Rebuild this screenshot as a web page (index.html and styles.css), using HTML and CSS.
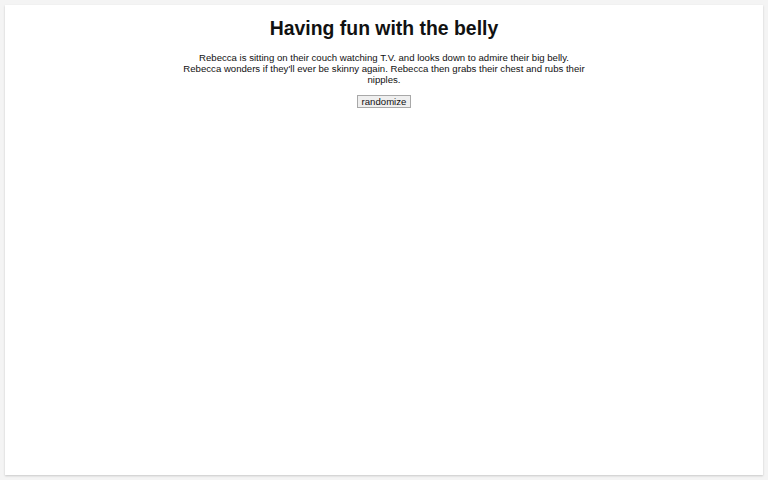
FILE: index.html
```html
<!DOCTYPE html>
<html lang="en">
<head>
<meta charset="utf-8">
<title>Having fun with the belly</title>
<link rel="stylesheet" href="styles.css">
</head>
<body>
<main class="card">
  <h1 class="title">Having fun with the belly</h1>
  <p class="story">Rebecca is sitting on their couch watching T.V. and looks down to admire their big belly. Rebecca wonders if they'll ever be skinny again. Rebecca then grabs their chest and rubs their nipples.</p>
  <button class="btn" type="button">randomize</button>
</main>
</body>
</html>
```

FILE: styles.css
```css
html, body {
  margin: 0;
  height: 100%;
}

body {
  background: #f4f4f4;
  padding: 5px;
  box-sizing: border-box;
  font-family: "Liberation Sans", Arial, sans-serif;
  color: #111;
}

.card {
  height: 100%;
  box-sizing: border-box;
  background: #fff;
  box-shadow: 0 1px 2px rgba(0, 0, 0, 0.18);
  display: flex;
  flex-direction: column;
  align-items: center;
  padding-top: 12px;
}

.title {
  margin: 0;
  font-size: 19.4px;
  font-weight: bold;
  line-height: 22px;
}

.story {
  max-width: 406px;
  margin: 14px 0 0;
  font-size: 9.6px;
  line-height: 10.8px;
  text-align: center;
}

.btn {
  margin-top: 10px;
  font-family: "Liberation Sans", Arial, sans-serif;
  font-size: 9.6px;
  line-height: 11px;
  padding: 0 4px;
  background: #efefef;
  border: 1px solid #a8a8a8;
  border-radius: 0;
  color: #111;
}
```
